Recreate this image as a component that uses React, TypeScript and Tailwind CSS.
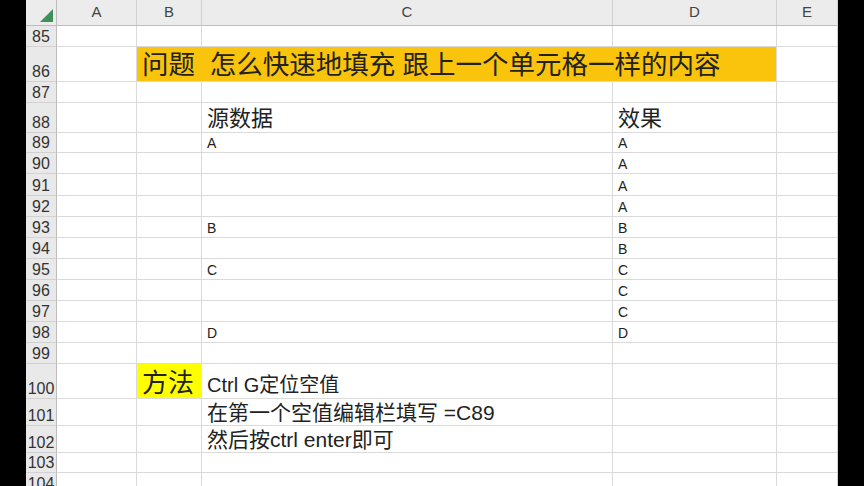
import React from 'react';

const cols = [
  { key: 'A', w: 80 },
  { key: 'B', w: 65 },
  { key: 'C', w: 411 },
  { key: 'D', w: 164 },
  { key: 'E', w: 61 },
];

type Row = { n: number; h: number; c?: Record<string, string>; size?: string };

const rows: Row[] = [
  { n: 85, h: 21 },
  { n: 86, h: 35 },
  { n: 87, h: 21 },
  { n: 88, h: 30, c: { C: '源数据', D: '效果' }, size: 'text-[22px]' },
  { n: 89, h: 20, c: { C: 'A', D: 'A' } },
  { n: 90, h: 21, c: { D: 'A' } },
  { n: 91, h: 22, c: { D: 'A' } },
  { n: 92, h: 21, c: { D: 'A' } },
  { n: 93, h: 21, c: { C: 'B', D: 'B' } },
  { n: 94, h: 21, c: { D: 'B' } },
  { n: 95, h: 21, c: { C: 'C', D: 'C' } },
  { n: 96, h: 21, c: { D: 'C' } },
  { n: 97, h: 21, c: { D: 'C' } },
  { n: 98, h: 21, c: { C: 'D', D: 'D' } },
  { n: 99, h: 21 },
  { n: 100, h: 35 },
  { n: 101, h: 27, c: { C: '在第一个空值编辑栏填写 =C89' }, size: 'text-[21px]' },
  { n: 102, h: 27, c: { C: '然后按ctrl enter即可' }, size: 'text-[21px]' },
  { n: 103, h: 20 },
  { n: 104, h: 21 },
];

const font = { fontFamily: '"Liberation Sans", "Noto Sans CJK SC", sans-serif' };

const RowHead: React.FC<{ n: number; h: number }> = ({ n, h }) => (
  <div
    className="w-[31px] shrink-0 bg-[#e9e9e9] border-r border-b border-r-[#bcbcbc] border-b-[#d2d2d2] flex items-end justify-center pb-[1px] text-[16px] leading-none text-[#333]"
    style={{ height: h }}
  >
    {n}
  </div>
);

export default function App() {
  return (
    <div className="w-[864px] h-[486px] bg-black flex overflow-hidden" style={font}>
      <div className="ml-[26px] w-[812px] h-full bg-white flex flex-col overflow-hidden border-r border-[#d0d0d0]">
        {/* column header */}
        <div className="flex h-[26px] shrink-0 bg-[#ececec] border-b border-[#bdbdbd]">
          <div className="w-[31px] shrink-0 border-r border-[#bdbdbd] relative">
            <svg className="absolute right-[3px] bottom-[3px]" width="13" height="13" viewBox="0 0 13 13">
              <polygon points="13,0 13,13 0,13" fill="#3f8f5a" />
            </svg>
          </div>
          {cols.map((c) => (
            <div
              key={c.key}
              className="shrink-0 border-r border-[#d0d0d0] flex items-center justify-center text-[15px] text-[#444]"
              style={{ width: c.w }}
            >
              {c.key}
            </div>
          ))}
        </div>

        {rows.map((r) => {
          if (r.n === 86) {
            return (
              <div key={r.n} className="flex shrink-0" style={{ height: r.h }}>
                <RowHead n={r.n} h={r.h} />
                <div className="w-[80px] shrink-0 border-r border-b border-[#dadada]" />
                <div className="w-[640px] shrink-0 bg-[#fac30c] border-r border-b border-[#dadada] flex items-center pl-[5px] pt-[2px] text-[26.5px] leading-none text-[#222] whitespace-pre">
                  问题  怎么快速地填充 跟上一个单元格一样的内容
                </div>
                <div className="w-[61px] shrink-0 border-r border-b border-[#dadada]" />
              </div>
            );
          }
          if (r.n === 100) {
            return (
              <div key={r.n} className="flex shrink-0" style={{ height: r.h }}>
                <RowHead n={r.n} h={r.h} />
                <div className="w-[80px] shrink-0 border-r border-b border-[#dadada]" />
                <div className="w-[65px] shrink-0 bg-[#ffff00] border-b border-[#dadada] flex items-center pl-[5px] pt-[3px] text-[26px] leading-none text-[#222]">
                  方法
                </div>
                <div className="w-[411px] shrink-0 border-r border-b border-[#dadada] flex items-end pl-[5px] pb-[3px] text-[20px] leading-none text-[#222] whitespace-pre">
                  Ctrl G定位空值
                </div>
                <div className="w-[164px] shrink-0 border-r border-b border-[#dadada]" />
                <div className="w-[61px] shrink-0 border-r border-b border-[#dadada]" />
              </div>
            );
          }
          return (
            <div key={r.n} className="flex shrink-0" style={{ height: r.h }}>
              <RowHead n={r.n} h={r.h} />
              {cols.map((c) => (
                <div
                  key={c.key}
                  className={`shrink-0 border-r border-b border-[#dadada] flex items-end pl-[5px] pb-[2px] leading-none text-[#222] whitespace-pre ${r.size ?? 'text-[14px]'}`}
                  style={{ width: c.w }}
                >
                  {r.c?.[c.key] ?? ''}
                </div>
              ))}
            </div>
          );
        })}
      </div>
    </div>
  );
}
